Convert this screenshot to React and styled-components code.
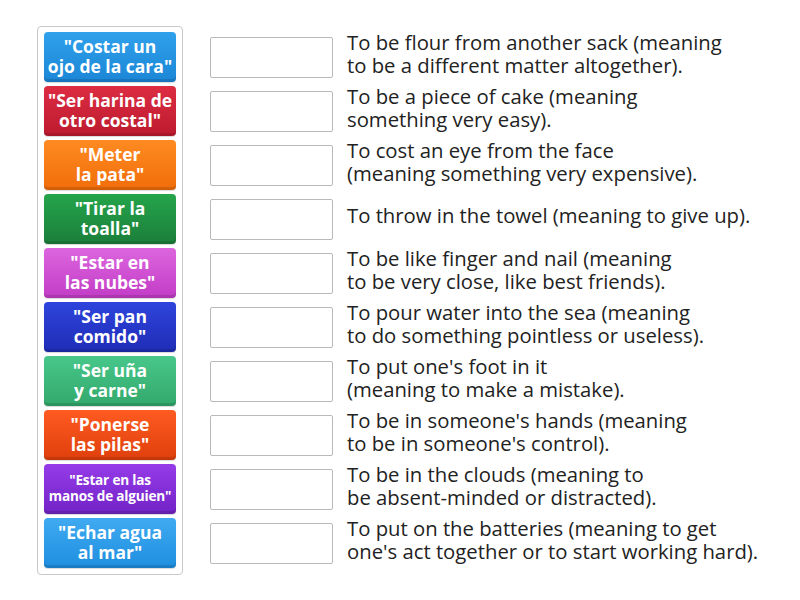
import React from 'react';
import styled, { createGlobalStyle } from 'styled-components';

const GlobalStyle = createGlobalStyle`
    body {
        margin: 0;
        background: #fff;
        font-family: "Open Sans", "Liberation Sans", sans-serif;
    }
`;

const Page = styled.main`
    display: flex;
    align-items: flex-start;
    padding: 26px 0 0 37px;
    width: 800px;
    height: 600px;
    box-sizing: border-box;
`;

const Panel = styled.section`
    display: flex;
    flex-direction: column;
    gap: 4px;
    width: 146px;
    padding: 5px 6px 6px;
    border: solid 1px #c8c8c8;
    border-radius: 4px;
    box-sizing: border-box;
`;

const Tile = styled.div`
    display: flex;
    align-items: center;
    justify-content: center;
    height: 50px;
    padding: 0 1px 2px;
    box-sizing: border-box;
    border-radius: 4px;
    background: linear-gradient(to bottom, ${p => p.top}, ${p => p.bottom});
    box-shadow: inset 0 -3px 0 rgba(0, 0, 0, 0.12), 0 1px 1px rgba(0, 0, 0, 0.15);
    color: #fff;
    font-weight: 700;
    font-size: ${p => (p.small ? '13.6px' : '17.5px')};
    line-height: ${p => (p.small ? '16px' : '20px')};
    letter-spacing: ${p => (p.small ? '-0.2px' : '0')};
    text-align: center;
    white-space: pre-line;
`;

const Rows = styled.section`
    display: flex;
    flex-direction: column;
    gap: 4px;
    margin: 6px 0 0 27px;
`;

const Row = styled.div`
    display: flex;
    align-items: center;
    height: 50px;
    gap: 14px;
`;

const Slot = styled.div`
    width: 123px;
    height: 41px;
    flex-shrink: 0;
    border: solid 1px #b9b9b9;
    border-radius: 2px;
    box-sizing: border-box;
    background: #fff;
`;

const Meaning = styled.p`
    margin: -7px 0 0;
    color: #222;
    font-size: 20.3px;
    line-height: 23px;
    white-space: pre-line;
`;

const tiles = [
    { text: '"Costar un\nojo de la cara"', top: '#31a1ec', bottom: '#1b86d6' },
    { text: '"Ser harina de\notro costal"', top: '#dc2c42', bottom: '#bd1b2f' },
    { text: '"Meter\nla pata"', top: '#ff8b22', bottom: '#f06d0a' },
    { text: '"Tirar la\ntoalla"', top: '#25a54b', bottom: '#1b7e3a' },
    { text: '"Estar en\nlas nubes"', top: '#dc66de', bottom: '#c33cc6' },
    { text: '"Ser pan\ncomido"', top: '#2e44dc', bottom: '#1f2db6' },
    { text: '"Ser uña\ny carne"', top: '#48c78a', bottom: '#33a86c' },
    { text: '"Ponerse\nlas pilas"', top: '#ff5b22', bottom: '#df3f0c' },
    { text: '"Estar en las\nmanos de alguien"', top: '#953ce8', bottom: '#7223c6', small: true },
    { text: '"Echar agua\nal mar"', top: '#40aaf1', bottom: '#1d8edf' },
];

const meanings = [
    'To be flour from another sack (meaning\nto be a different matter altogether).',
    'To be a piece of cake (meaning\nsomething very easy).',
    'To cost an eye from the face\n(meaning something very expensive).',
    'To throw in the towel (meaning to give up).',
    'To be like finger and nail (meaning\nto be very close, like best friends).',
    'To pour water into the sea (meaning\nto do something pointless or useless).',
    "To put one's foot in it\n(meaning to make a mistake).",
    "To be in someone's hands (meaning\nto be in someone's control).",
    'To be in the clouds (meaning to\nbe absent-minded or distracted).',
    "To put on the batteries (meaning to get\none's act together or to start working hard).",
];

const App = () => {
    return (
        <>
            <GlobalStyle />
            <Page>
                <Panel>
                    {tiles.map(tile => (
                        <Tile key={tile.text} top={tile.top} bottom={tile.bottom} small={tile.small}>
                            {tile.text}
                        </Tile>
                    ))}
                </Panel>

                <Rows>
                    {meanings.map(text => (
                        <Row key={text}>
                            <Slot />
                            <Meaning>{text}</Meaning>
                        </Row>
                    ))}
                </Rows>
            </Page>
        </>
    );
};

export default App;
